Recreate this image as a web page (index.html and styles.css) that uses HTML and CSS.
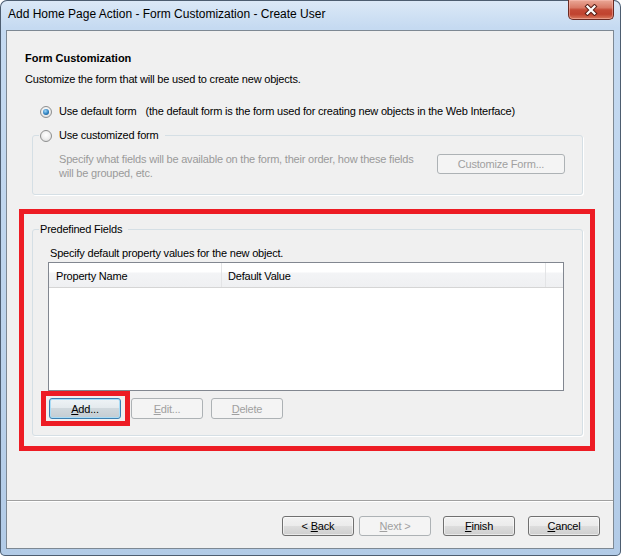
FILE: index.html
```html
<!DOCTYPE html>
<html lang="en">
<head>
  <meta charset="UTF-8" />
  <title>Add Home Page Action - Form Customization - Create User</title>
  <link rel="stylesheet" href="styles.css">
</head>
<body>
  <div class="window">
    <div class="titlebar">
      <span class="title">Add Home Page Action - Form Customization - Create User</span>
      <button class="close-btn" aria-label="Close">
        <svg width="14" height="12" viewBox="0 0 14 12">
          <path d="M3.5 2.5 L10.5 9.5 M10.5 2.5 L3.5 9.5" stroke="#5a2118" stroke-width="4.2" stroke-linecap="square" fill="none"/>
          <path d="M3.5 2.5 L10.5 9.5 M10.5 2.5 L3.5 9.5" stroke="#fff" stroke-width="2.2" stroke-linecap="square" fill="none"/>
        </svg>
      </button>
    </div>

    <div class="client">
      <div class="main">
        <h1 class="page-title">Form Customization</h1>
        <p class="desc">Customize the form that will be used to create new objects.</p>

        <div class="option">
          <span class="radio checked"></span>
          <span>Use default form</span>
          <span class="hint">(the default form is the form used for creating new objects in the Web Interface)</span>
        </div>

        <fieldset class="group custom-group">
          <legend>
            <span class="option-inline"><span class="radio"></span>Use customized form</span>
          </legend>
          <div class="custom-body">
            <p class="muted">Specify what fields will be available on the form, their order, how these fields<br>will be grouped, etc.</p>
            <button class="btn wide" disabled>Customize Form...</button>
          </div>
        </fieldset>

        <div class="highlight">
          <fieldset class="group fields-group">
            <legend>Predefined Fields</legend>
            <p class="sub">Specify default property values for the new object.</p>
            <div class="listview">
              <div class="lv-header">
                <div class="lv-col name">Property Name</div>
                <div class="lv-col value">Default Value</div>
                <div class="lv-col filler"></div>
              </div>
            </div>
            <div class="buttons-row">
              <span class="add-wrap">
                <button class="btn default"><u>A</u>dd...</button>
                <span class="mark"></span>
              </span>
              <button class="btn edit" disabled><u>E</u>dit...</button>
              <button class="btn" disabled><u>D</u>elete</button>
            </div>
          </fieldset>
        </div>
      </div>

      <div class="footer">
        <button class="btn back">&lt; <u>B</u>ack</button>
        <button class="btn next" disabled><u>N</u>ext &gt;</button>
        <button class="btn finish"><u>F</u>inish</button>
        <button class="btn"><u>C</u>ancel</button>
      </div>
    </div>
  </div>
</body>
</html>
```

FILE: styles.css
```css
body {
  margin: 0;
  background: #fff;
  font-family: "Liberation Sans", Arial, sans-serif;
  font-size: 11px;
  letter-spacing: -0.2px;
  color: #000;
}

p {
  margin: 0;
}

.window {
  width: 621px;
  height: 556px;
  box-sizing: border-box;
  border-radius: 7px 7px 5px 5px;
  background: linear-gradient(180deg, #dce9f7 0, #c5daf1 28px, #bcd3ec 60%, #b2cbe7 100%);
  box-shadow: inset 0 0 0 1px #4d5d70;
}

/* title bar */
.titlebar {
  display: flex;
  align-items: flex-start;
  height: 30px;
}

.title {
  margin: 6px 0 0 8px;
  font-size: 12px;
  line-height: 16px;
  letter-spacing: 0;
}

.close-btn {
  display: flex;
  align-items: center;
  justify-content: center;
  width: 46px;
  height: 20px;
  margin: 0 7px 0 auto;
  padding: 0;
  border: 1px solid #6b2a22;
  border-top: none;
  border-radius: 0 0 5px 5px;
  background: linear-gradient(#eaa897 0, #d97a66 40%, #c44a36 52%, #c0432f 75%, #d97a5e 100%);
  box-shadow: inset 0 0 0 1px rgba(255, 200, 190, .45);
}

/* client area */
.client {
  display: flex;
  flex-direction: column;
  height: 519px;
  box-sizing: border-box;
  margin: 0 7px 0 6px;
  border: 1px solid #7d8893;
  background: #f0f0f0;
}

.main {
  flex: 1;
  padding-top: 20px;
}

.page-title {
  margin: 0 0 0 18px;
  font-size: 11px;
  font-weight: bold;
  line-height: 15px;
  letter-spacing: 0;
}

.desc {
  margin: 6px 0 0 18px;
  line-height: 15px;
}

.option {
  display: flex;
  align-items: center;
  margin: 17px 0 0 33px;
  line-height: 15px;
}

.option-inline {
  display: flex;
  align-items: center;
}

.radio {
  display: inline-flex;
  align-items: center;
  justify-content: center;
  flex: none;
  width: 12px;
  height: 12px;
  box-sizing: border-box;
  margin-right: 7px;
  border: 1px solid #8e8f8f;
  border-radius: 50%;
  background: radial-gradient(circle at 50% 40%, #fff 0, #f1f1f1 45%, #d6d6d6 100%);
}

.radio.checked::after {
  content: "";
  width: 6px;
  height: 6px;
  border-radius: 50%;
  background: radial-gradient(circle at 40% 35%, #9fd8fa 0, #2c7fbf 55%, #164a74 100%);
}

.hint {
  margin-left: 9px;
}

/* group boxes */
.group {
  box-sizing: border-box;
  width: 551px;
  min-width: 0;
  margin: 0;
  padding: 0;
  border: 1px solid #d5dfe5;
  border-radius: 3px;
  box-shadow: 1px 1px 0 #fff;
}

.group legend {
  margin-left: 6px;
  padding: 0 6px 0 1px;
  line-height: 15px;
}

.custom-group {
  margin: 9px 0 0 25px;
}

.custom-body {
  display: flex;
  justify-content: space-between;
  align-items: flex-start;
  padding: 9px 17px 14px 26px;
}

.muted {
  color: #9a9a9a;
  line-height: 14px;
}

.highlight {
  box-sizing: border-box;
  width: 576px;
  margin: 14px 0 0 12px;
  padding: 8px 0 10px 8px;
  border: 5px solid #ed1c24;
}

.fields-group {
  padding-bottom: 16px;
}

.sub {
  margin: 9px 0 0 17px;
  line-height: 15px;
}

.listview {
  box-sizing: border-box;
  width: 516px;
  height: 129px;
  margin: 1px 0 0 15px;
  border: 1px solid #828790;
  background: #fff;
}

.lv-header {
  display: flex;
  height: 24px;
  border-bottom: 1px solid #d5d5d5;
  background: linear-gradient(#fff 0, #fff 9px, #f3f4f6 10px, #eff0f2 100%);
}

.lv-col {
  box-sizing: border-box;
  height: 24px;
  line-height: 26px;
  border-right: 1px solid #e3e4e6;
}

.lv-col.name {
  width: 173px;
  padding-left: 7px;
}

.lv-col.value {
  width: 324px;
  padding-left: 6px;
}

.lv-col.filler {
  flex: 1;
  border-right: none;
}

/* buttons */
.buttons-row {
  display: flex;
  margin: 7px 0 0 16px;
}

.btn {
  box-sizing: border-box;
  width: 72px;
  height: 21px;
  padding: 0;
  font: inherit;
  letter-spacing: inherit;
  color: #000;
  border: 1px solid #707070;
  border-radius: 3px;
  background: linear-gradient(#f2f2f2 0, #ebebeb 50%, #dddddd 50%, #cfcfcf 100%);
  box-shadow: inset 0 0 0 1px rgba(255, 255, 255, .55);
}

.btn:disabled {
  color: #a0a0a0;
  border-color: #adb2b5;
  background: #f4f4f4;
  box-shadow: none;
}

.btn.wide {
  width: 128px;
  height: 20px;
  margin-top: 2px;
}

.btn.default {
  border-color: #3c7fb1;
  background: linear-gradient(#eef3f6 0, #e3e9ed 50%, #d0d8dd 50%, #c4ccd2 100%);
  box-shadow: inset 0 0 0 1px #a9dcf6;
}

.add-wrap {
  position: relative;
  display: flex;
  margin-right: 10px;
}

.mark {
  position: absolute;
  left: -8px;
  top: -7px;
  right: -9px;
  bottom: -7px;
  border: 5px solid #ed1c24;
  pointer-events: none;
}

.edit {
  margin-right: 8px;
}

/* footer */
.footer {
  display: flex;
  justify-content: flex-end;
  align-items: flex-start;
  height: 48px;
  box-sizing: border-box;
  padding: 15px 13px 0 0;
  border-top: 1px solid #a0a0a0;
  box-shadow: inset 0 1px 0 #fff;
}

.footer .btn {
  height: 20px;
}

.back {
  margin-right: 5px;
}

.next {
  margin-right: 12px;
}

.finish {
  margin-right: 13px;
}
```
